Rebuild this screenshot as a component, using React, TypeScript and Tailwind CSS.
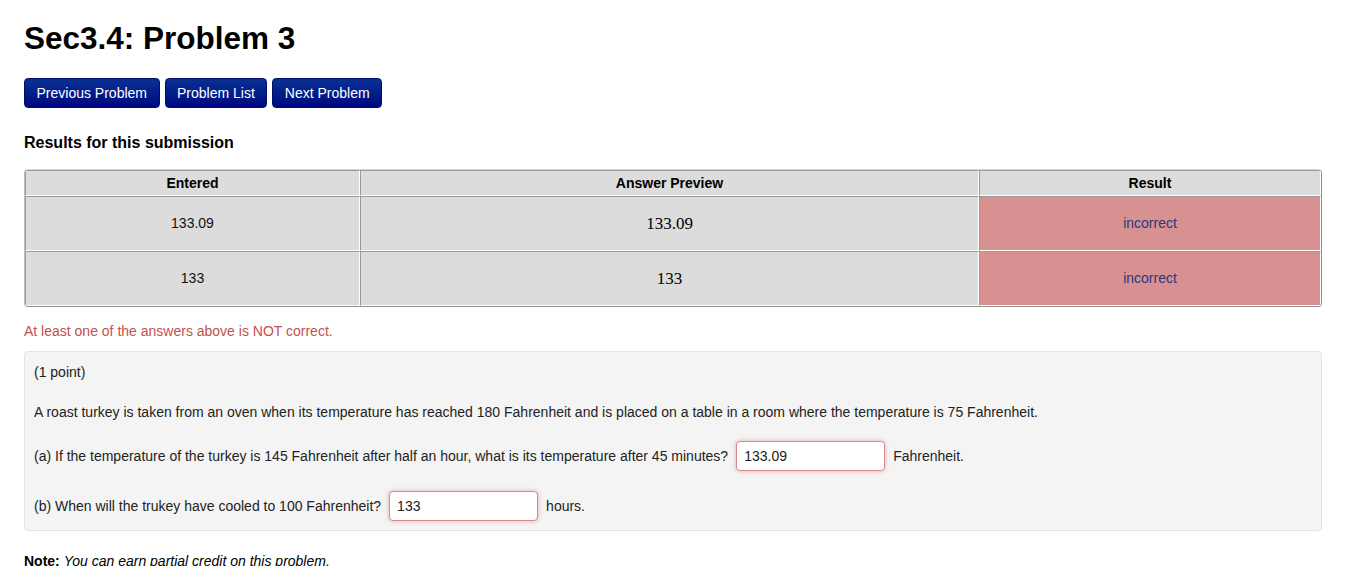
const FONT = { fontFamily: '"Liberation Sans", Arial, sans-serif' };

const rows = [
  { entered: "133.09", preview: "133.09" },
  { entered: "133", preview: "133" },
];

const NavButton = ({ label }: { label: string }) => (
  <button className="h-[30px] rounded-[4px] border border-[#00106a] bg-gradient-to-b from-[#0c2f93] to-[#000480] px-[11.5px] text-[14px] text-white">
    {label}
  </button>
);

const AnswerInput = ({ value }: { value: string }) => (
  <div className="flex h-[30px] w-[149px] items-center rounded-[4px] border border-[#d98a88] bg-white px-[7px] text-[14px] text-[#222] shadow-[0_0_4px_rgba(210,80,80,0.45)]">
    {value}
  </div>
);

export default function App() {
  return (
    <div className="min-h-[566px] bg-white pl-[24px] pr-[32px] text-[#111]" style={FONT}>
      <h1 className="pt-[20px] text-[31.5px] font-bold leading-[36px] text-black">Sec3.4: Problem 3</h1>

      <div className="mt-[22px] flex gap-[5px]">
        <NavButton label="Previous Problem" />
        <NavButton label="Problem List" />
        <NavButton label="Next Problem" />
      </div>

      <h2 className="mt-[25px] text-[16px] font-bold leading-[20px] text-black">Results for this submission</h2>

      <div className="mt-[16px] overflow-hidden rounded-[4px] border border-t-[#d6d6d6] border-l-[#bdbdbd] border-r-[#8e8e8e] border-b-[#8e8e8e] bg-white">
        <div className="grid grid-cols-[335px_619px_1fr] text-[14px]">
          {["Entered", "Answer Preview", "Result"].map((h) => (
            <div
              key={h}
              className="flex h-[26px] items-center justify-center border border-t-[#9a9a9a] border-l-[#9a9a9a] border-r-white border-b-white bg-[#dcdcdc] font-bold text-black"
            >
              {h}
            </div>
          ))}
          {rows.map((r) => (
            <div key={r.entered} className="contents">
              <div className="flex h-[55px] items-center justify-center border border-t-[#9a9a9a] border-l-[#9a9a9a] border-r-white border-b-white bg-[#dcdcdc]">
                {r.entered}
              </div>
              <div
                className="flex h-[55px] items-center justify-center border border-t-[#9a9a9a] border-l-[#9a9a9a] border-r-white border-b-white bg-[#dcdcdc] text-[17px] text-black"
                style={{ fontFamily: '"Liberation Serif", "DejaVu Serif", serif' }}
              >
                {r.preview}
              </div>
              <div className="flex h-[55px] items-center justify-center border border-t-[#9a9a9a] border-l-[#9a9a9a] border-r-white border-b-white bg-[#d69190] text-[#2e3580]">
                incorrect
              </div>
            </div>
          ))}
        </div>
      </div>

      <p className="mt-[14px] text-[14px] leading-[20px] text-[#c4504d]">At least one of the answers above is NOT correct.</p>

      <div className="mt-[10px] rounded-[4px] border border-[#e3e3e3] bg-[#f4f4f4] px-[9px] pt-[10px] pb-[9px] text-[14px] leading-[20px] text-[#222]">
        <p>(1 point)</p>
        <p className="mt-[20px]">
          A roast turkey is taken from an oven when its temperature has reached 180 Fahrenheit and is placed on a table in
          a room where the temperature is 75 Fahrenheit.
        </p>
        <div className="mt-[19px] flex h-[30px] items-center gap-[8px]">
          <span>(a) If the temperature of the turkey is 145 Fahrenheit after half an hour, what is its temperature after 45 minutes?</span>
          <AnswerInput value="133.09" />
          <span>Fahrenheit.</span>
        </div>
        <div className="mt-[20px] flex h-[30px] items-center gap-[8px]">
          <span>(b) When will the trukey have cooled to 100 Fahrenheit?</span>
          <AnswerInput value="133" />
          <span>hours.</span>
        </div>
      </div>

      <p className="mt-[20px] text-[14px] leading-[20px] text-black">
        <span className="font-bold">Note:</span> <span className="italic">You can earn partial credit on this problem.</span>
      </p>
    </div>
  );
}
